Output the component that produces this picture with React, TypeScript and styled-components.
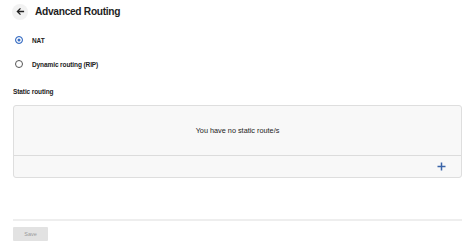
import styled, { createGlobalStyle } from "styled-components";

const GlobalStyle = createGlobalStyle`
  body {
    margin: 0;
    background: #ffffff;
    font-family: "Liberation Sans", Arial, sans-serif;
    color: #222222;
  }
`;

const Page = styled.div`
  width: 474px;
  height: 247px;
  display: flex;
  flex-direction: column;
  padding: 0 12px 0 13px;
  box-sizing: border-box;
`;

const Header = styled.div`
  height: 23px;
  display: flex;
  align-items: center;
  gap: 7px;
  margin-left: -1px;
`;

const BackButton = styled.button`
  width: 16px;
  height: 16px;
  border-radius: 50%;
  border: none;
  padding: 0;
  background: #f2f2f2;
  display: flex;
  align-items: center;
  justify-content: center;
  color: #222222;
`;

const Title = styled.h1`
  margin: 0 0 1px;
  font-size: 10.2px;
  letter-spacing: -0.3px;
  font-weight: 700;
  color: #1e1e1e;
`;

const RadioList = styled.div`
  display: flex;
  flex-direction: column;
  gap: 14px;
  padding: 12px 0 0 2px;
`;

const RadioRow = styled.label`
  display: flex;
  align-items: center;
  gap: 9px;
  height: 10px;
`;

const RadioDot = styled.span<{ $checked?: boolean }>`
  width: 8px;
  height: 8px;
  border-radius: 50%;
  box-sizing: border-box;
  border: 1px solid ${(p) => (p.$checked ? "#3a6fc4" : "#555555")};
  background: ${(p) => (p.$checked ? "#3a6fc4" : "#ffffff")};
  box-shadow: ${(p) => (p.$checked ? "inset 0 0 0 1.5px #ffffff" : "none")};
`;

const RadioLabel = styled.span`
  font-size: 6.5px;
  letter-spacing: -0.1px;
  font-weight: 700;
  color: #222222;
`;

const SectionLabel = styled.div`
  font-size: 6.5px;
  letter-spacing: -0.1px;
  font-weight: 700;
  color: #222222;
  margin-top: 19px;
`;

const RoutesBox = styled.div`
  margin-top: 10px;
  height: 73px;
  display: flex;
  flex-direction: column;
  border: 1px solid #dedede;
  border-radius: 3px;
  background: #f8f8f8;
  box-sizing: border-box;
`;

const EmptyState = styled.div`
  flex: 1;
  display: flex;
  align-items: center;
  justify-content: center;
  font-size: 7.3px;
  color: #222222;
  border-bottom: 1px solid #dcdcdc;
`;

const BoxFooter = styled.div`
  height: 21px;
  display: flex;
  align-items: center;
  justify-content: flex-end;
  padding-right: 15px;
`;

const AddButton = styled.button`
  border: none;
  background: none;
  padding: 0;
  display: flex;
  color: #3a64a8;
`;

const Divider = styled.div`
  margin-top: 41px;
  height: 2px;
  background: #eeeeee;
`;

const SaveButton = styled.button`
  margin-top: 6px;
  width: 35px;
  height: 14px;
  border: none;
  border-radius: 1px;
  background: #e2e2e2;
  color: #9a9a9a;
  font-family: "Liberation Sans", Arial, sans-serif;
  font-size: 5.5px;
  padding: 0;
`;

const App = () => {
  return (
    <>
      <GlobalStyle />
      <Page>
        <Header>
          <BackButton>
            <svg width="9" height="9" viewBox="0 0 10 10" fill="none" stroke="currentColor" strokeWidth="1.4">
              <path d="M9 5H1.5M5 1.5 1.5 5 5 8.5" />
            </svg>
          </BackButton>
          <Title>Advanced Routing</Title>
        </Header>
        <RadioList>
          <RadioRow>
            <RadioDot $checked />
            <RadioLabel>NAT</RadioLabel>
          </RadioRow>
          <RadioRow>
            <RadioDot />
            <RadioLabel>Dynamic routing (RIP)</RadioLabel>
          </RadioRow>
        </RadioList>
        <SectionLabel>Static routing</SectionLabel>
        <RoutesBox>
          <EmptyState>You have no static route/s</EmptyState>
          <BoxFooter>
            <AddButton>
              <svg width="9" height="9" viewBox="0 0 9 9" stroke="currentColor" strokeWidth="1.5">
                <path d="M4.5 0.5v8M0.5 4.5h8" />
              </svg>
            </AddButton>
          </BoxFooter>
        </RoutesBox>
        <Divider />
        <SaveButton>Save</SaveButton>
      </Page>
    </>
  );
};

export default App;
